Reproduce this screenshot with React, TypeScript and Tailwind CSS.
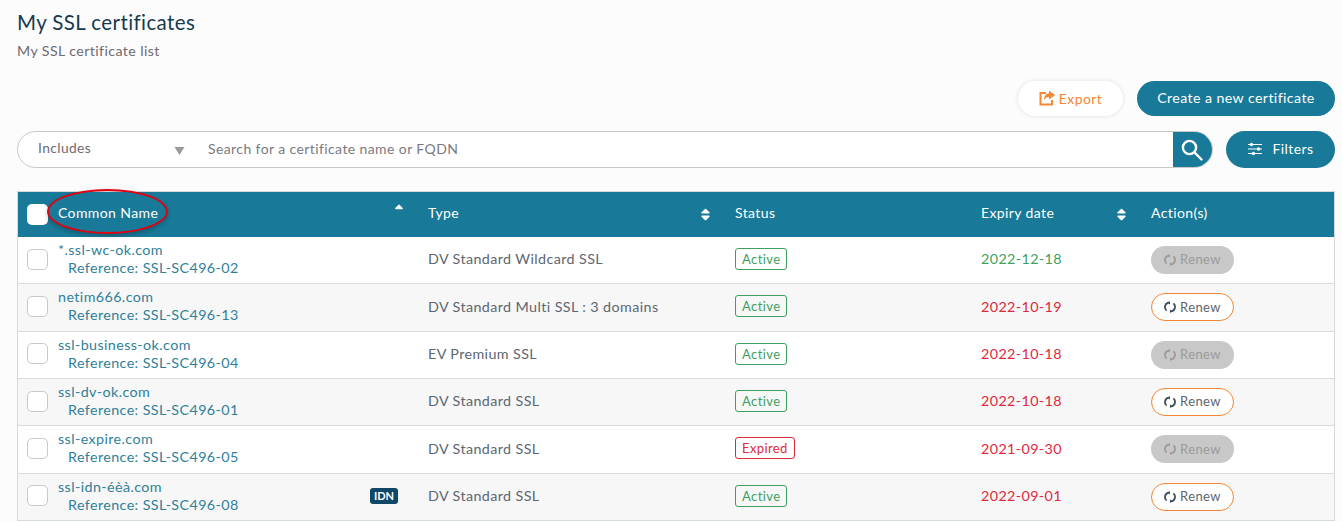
import { FaSort, FaSortUp } from "react-icons/fa";

type Cert = {
  name: string;
  ref: string;
  type: string;
  status: "Active" | "Expired";
  expiry: string;
  ok?: boolean;
  canRenew?: boolean;
  idn?: boolean;
};

const certs: Cert[] = [
  { name: "*.ssl-wc-ok.com", ref: "SSL-SC496-02", type: "DV Standard Wildcard SSL", status: "Active", expiry: "2022-12-18", ok: true },
  { name: "netim666.com", ref: "SSL-SC496-13", type: "DV Standard Multi SSL : 3 domains", status: "Active", expiry: "2022-10-19", canRenew: true },
  { name: "ssl-business-ok.com", ref: "SSL-SC496-04", type: "EV Premium SSL", status: "Active", expiry: "2022-10-18" },
  { name: "ssl-dv-ok.com", ref: "SSL-SC496-01", type: "DV Standard SSL", status: "Active", expiry: "2022-10-18", canRenew: true },
  { name: "ssl-expire.com", ref: "SSL-SC496-05", type: "DV Standard SSL", status: "Expired", expiry: "2021-09-30" },
  { name: "ssl-idn-éèà.com", ref: "SSL-SC496-08", type: "DV Standard SSL", status: "Active", expiry: "2022-09-01", canRenew: true, idn: true },
];

const cols = "grid grid-cols-[400px_307px_246px_170px_1fr] items-center";

function RenewIcon({ className }: { className: string }) {
  return (
    <svg viewBox="0 0 12 12" fill="none" stroke="currentColor" strokeWidth="1.8" className={className}>
      <path d="M4.6 1.6A4.6 4.6 0 0 0 2.6 9.6" />
      <path d="M7.4 10.4A4.6 4.6 0 0 0 9.4 2.4" />
      <path d="M6 0v3.6L3.2 1.8z" fill="currentColor" stroke="none" />
      <path d="M6 12V8.4L8.8 10.2z" fill="currentColor" stroke="none" />
    </svg>
  );
}

function RenewButton({ enabled }: { enabled?: boolean }) {
  return (
    <button
      type="button"
      className={`flex h-[28px] w-[83px] items-center justify-center gap-[4px] rounded-full text-[13px] ${
        enabled ? "border border-[#f58634] bg-white text-[#5d6670]" : "bg-[#c8c8c8] text-[#9b9b9b]"
      }`}
    >
      <RenewIcon className={`h-[12px] w-[12px] ${enabled ? "text-[#3d5060]" : "text-[#9b9b9b]"}`} />
      Renew
    </button>
  );
}

export default function App() {
  return (
    <div className="h-[522px] w-[1342px] overflow-hidden bg-[#fcfcfc] pl-[17px] pr-[7px] pt-[10px] font-['Lato',sans-serif] tracking-[0.4px] text-[#5d6670]">
      <h1 className="text-[20.5px] leading-[24px] text-[#17394f]">My SSL certificates</h1>
      <p className="mt-[8px] text-[14.2px] leading-[18px] text-[#6f6a70]">My SSL certificate list</p>

      <div className="mt-[21px] flex justify-end gap-[14px]">
        <button
          type="button"
          className="flex h-[35px] w-[105px] items-center justify-center gap-[4px] rounded-full bg-white pb-[1px] text-[14px] text-[#f58634] shadow-[0_0_4px_rgba(0,0,0,0.12)]"
        >
          <svg viewBox="0 0 16 16" className="h-[16px] w-[16px]" fill="none">
            <path d="M7 3H1.5v11.5H13V10" stroke="currentColor" strokeWidth="2" />
            <path d="M10 0.5 16 5l-6 4.5V7C7.5 7 6 8 5 10.5 5 6 7 3.5 10 3.2z" fill="currentColor" />
          </svg>
          Export
        </button>
        <button type="button" className="h-[35px] w-[198px] rounded-full bg-[#187998] pb-[2px] text-[14.2px] text-white">
          Create a new certificate
        </button>
      </div>

      <div className="mt-[15px] flex gap-[13px]">
        <div className="flex h-[37px] w-[1196px] items-stretch overflow-hidden rounded-full border border-[#c8c8c8] bg-white">
          <div className="flex w-[190px] items-center pl-[20px] pb-[2px] text-[13.8px] text-[#6f6a70]">
            <span className="flex-1">Includes</span>
            <svg viewBox="0 0 10 8" className="mr-[23px] mt-[4px] h-[8px] w-[11px] fill-[#9a9a9a]">
              <path d="M0 0h10L5 8z" />
            </svg>
          </div>
          <div className="flex flex-1 items-center pb-[2px] text-[14px] text-[#7a7a80]">Search for a certificate name or FQDN</div>
          <div className="-my-px -mr-px flex w-[40px] items-center justify-center bg-[#187998] pr-[2px] text-white">
            <svg viewBox="0 0 22 22" fill="none" stroke="currentColor" strokeWidth="2.4" className="h-[22px] w-[22px]">
              <circle cx="8.5" cy="8.5" r="6.6" />
              <path d="M13.4 13.4 20.5 20.5" strokeLinecap="round" />
            </svg>
          </div>
        </div>
        <button
          type="button"
          className="flex h-[37px] w-[109px] items-center justify-center gap-[11px] rounded-full bg-[#187998] pb-[2px] text-[14px] text-white"
        >
          <svg viewBox="0 0 14 14" className="h-[14px] w-[14px]" fill="none" stroke="currentColor" strokeWidth="1.2">
            <path d="M0 2.5h14M0 7h14M0 11.5h14" />
            <circle cx="3.5" cy="2.5" r="1.7" fill="currentColor" stroke="none" />
            <circle cx="10.5" cy="7" r="1.7" fill="currentColor" stroke="none" />
            <circle cx="5.5" cy="11.5" r="1.7" fill="currentColor" stroke="none" />
          </svg>
          Filters
        </button>
      </div>

      <div className="mt-[23px] w-[1318px] border border-b-0 border-[#d5d9dc] bg-white">
        <div className={`${cols} h-[45px] bg-[#187998] text-[14px] text-white`}>
          <div className="relative flex items-center pl-[9px]">
            <span className="h-[21px] w-[21px] rounded-[5px] bg-white" />
            <span className="ml-[10px] pb-[5px]">Common Name</span>
            <FaSortUp className="absolute right-[12px] top-[1px] h-[14px] w-[14px]" />
            <span className="absolute left-[29px] top-[-13px] h-[45px] w-[121px] rounded-[50%] border-2 border-[#e0000f] shadow-[0_2px_4px_rgba(0,0,0,0.25)]" />
          </div>
          <div className="flex items-center justify-between pl-[10px] pr-[12px]">
            <span className="pb-[5px]">Type</span>
            <FaSort className="h-[15px] w-[15px]" />
          </div>
          <div className="pb-[5px] pl-[10px]">Status</div>
          <div className="flex items-center justify-between pl-[10px] pr-[12px]">
            <span className="pb-[5px]">Expiry date</span>
            <FaSort className="h-[15px] w-[15px]" />
          </div>
          <div className="pb-[5px] pl-[10px]">Action(s)</div>
        </div>

        {certs.map((c, i) => (
          <div
            key={c.ref}
            className={`${cols} h-[47.33px] border-b border-[#d5dde0] pb-[2px] text-[14.3px] ${i % 2 ? "bg-[#f7f7f7]" : "bg-white"}`}
          >
            <div className="flex items-center pl-[9px]">
              <span className="h-[21px] w-[21px] rounded-[5px] border border-[#c9c9c9] bg-white" />
              <div className="ml-[10px] flex-1 leading-[18px] text-[#2f7f99]">
                <div>{c.name}</div>
                <div className="pl-[10px]">Reference: {c.ref}</div>
              </div>
              {c.idn && (
                <span className="mr-[20px] rounded-[3px] bg-[#0f4766] px-[4px] text-[11px] font-bold leading-[16px] tracking-normal text-white">
                  IDN
                </span>
              )}
            </div>
            <div className="pl-[10px] text-[#5d6670]">{c.type}</div>
            <div className="pl-[10px]">
              <span
                className={`inline-block rounded-[3px] border px-[6px] text-[13px] leading-[20px] ${
                  c.status === "Active" ? "border-[#3f9f5f] text-[#3f9f5f]" : "border-[#e0283c] text-[#e0283c]"
                }`}
              >
                {c.status}
              </span>
            </div>
            <div className={`pl-[10px] ${c.ok ? "text-[#3f9f5f]" : "text-[#e0283c]"}`}>{c.expiry}</div>
            <div className="pl-[10px] pt-[2px]">
              <RenewButton enabled={c.canRenew} />
            </div>
          </div>
        ))}
      </div>
    </div>
  );
}
